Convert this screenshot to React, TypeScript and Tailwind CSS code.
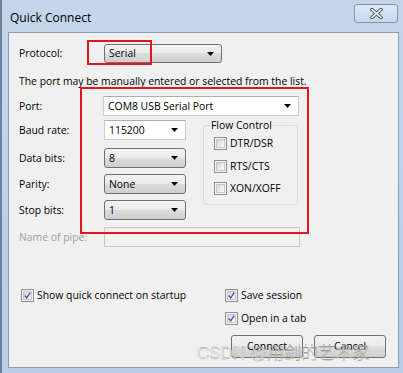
import React from "react";

function Arrow() {
  return (
    <svg width="7" height="4" viewBox="0 0 7 4" className="shrink-0">
      <path d="M0 0H7L3.5 4z" fill="#000" />
    </svg>
  );
}

function Drop({ value, w }: { value: string; w: string }) {
  return (
    <div
      className={`${w} h-[20px] rounded-[3px] border border-[#707070] bg-[linear-gradient(#f2f2f2,#ebebeb_50%,#dddddd_50%,#cfcfcf)] flex items-center justify-between pl-[4px] pr-[7px]`}
    >
      <span>{value}</span>
      <Arrow />
    </div>
  );
}

function Edit({ value, w }: { value: string; w: string }) {
  return (
    <div
      className={`${w} h-[20px] border border-[#c9ccd2] border-t-[#abadb3] bg-white flex items-center justify-between pl-[4px] pr-[7px]`}
    >
      <span>{value}</span>
      <Arrow />
    </div>
  );
}

function Check({ checked }: { checked?: boolean }) {
  return (
    <div className="w-[13px] h-[13px] border border-[#8e8f8f] bg-[#f4f4f4] p-[1px] shrink-0">
      <div className="w-full h-full border border-[#c6c6c6] bg-[linear-gradient(135deg,#d6d6d6,#fdfdfd)] flex items-center justify-center">
        {checked && (
          <svg width="9" height="9" viewBox="0 0 9 9">
            <path d="M1 4.5L3.5 7.5L8 0.8" fill="none" stroke="#3c5ea7" strokeWidth="1.8" />
          </svg>
        )}
      </div>
    </div>
  );
}

function Btn({ label }: { label: string }) {
  return (
    <div className="w-[72px] h-[23px] rounded-[3px] border border-[#707070] bg-[linear-gradient(#f2f2f2,#ebebeb_50%,#dddddd_50%,#cfcfcf)] flex items-center justify-center">
      {label}
    </div>
  );
}

export default function App() {
  return (
    <div className="w-[403px] h-[373px] overflow-hidden relative bg-[linear-gradient(#c3d6ec,#b8cde6)] border-l-2 border-[#6d819b] flex flex-col text-[10.4px] leading-[15px] text-black font-['Open_Sans','Noto_Sans',sans-serif]">
      <div className="h-[32px] flex items-start justify-between pl-[8px] pr-[5px] shrink-0">
        <div className="mt-[10px] text-[12px] leading-[16px]">Quick Connect</div>
        <div className="mt-[4px] w-[44px] h-[19px] rounded-[3px] border border-[#8195ae] bg-[linear-gradient(#dfe9f5,#c5d6ea)] flex items-center justify-center">
          <svg width="13" height="11" viewBox="0 0 13 11">
            <path d="M2 1.5L11 9.5M11 1.5L2 9.5" stroke="#4b5b6f" strokeWidth="3.6" strokeLinecap="round" />
            <path d="M2 1.5L11 9.5M11 1.5L2 9.5" stroke="#ffffff" strokeWidth="1.6" strokeLinecap="round" />
          </svg>
        </div>
      </div>
      <div className="relative flex-1 ml-[6px] mr-[4px] mb-[5px] border border-[#8a9cb3] bg-[#f0f0f0] flex flex-col pl-[10px]">
        <div className="mt-[11px] h-[19px] flex items-center">
          <div className="w-[85px]">Protocol:</div>
          <div className="w-[118px] h-[19px] rounded-[3px] border border-[#707070] bg-[linear-gradient(#f2f2f2,#ebebeb_50%,#dddddd_50%,#cfcfcf)] flex items-center justify-between pl-[4px] pr-[7px]">
            <span>Serial</span>
            <Arrow />
          </div>
        </div>
        <div className="mt-[11px] h-[15px]">The port may be manually entered or selected from the list.</div>
        <div className="mt-[7px] h-[20px] flex items-center">
          <div className="w-[84px]">Port:</div>
          <Edit value="COM8 USB Serial Port" w="w-[196px]" />
        </div>
        <div className="mt-[4px] flex">
          <div className="w-[167px] flex flex-col">
            <div className="h-[20px] flex items-center">
              <div className="w-[85px]">Baud rate:</div>
              <Edit value="115200" w="w-[82px]" />
            </div>
            <div className="mt-[8px] h-[20px] flex items-center">
              <div className="w-[85px]">Data bits:</div>
              <Drop value="8" w="w-[82px]" />
            </div>
            <div className="mt-[6px] h-[20px] flex items-center">
              <div className="w-[85px]">Parity:</div>
              <Drop value="None" w="w-[82px]" />
            </div>
            <div className="mt-[6px] h-[20px] flex items-center">
              <div className="w-[85px]">Stop bits:</div>
              <Drop value="1" w="w-[82px]" />
            </div>
          </div>
          <div className="ml-[17px] mt-[5px] w-[95px] h-[80px] relative rounded-[3px] border border-[#d5dfe5] flex flex-col pl-[10px] pt-[11px]">
            <div className="absolute left-[6px] top-[-8px] px-[1px] bg-[#f0f0f0]">Flow Control</div>
            <div className="flex items-center gap-[3px] h-[13px]">
              <Check />
              <span>DTR/DSR</span>
            </div>
            <div className="flex items-center gap-[3px] h-[13px] mt-[10px]">
              <Check />
              <span>RTS/CTS</span>
            </div>
            <div className="flex items-center gap-[3px] h-[13px] mt-[9px]">
              <Check />
              <span>XON/XOFF</span>
            </div>
          </div>
        </div>
        <div className="mt-[7px] h-[20px] flex items-center">
          <div className="w-[85px] text-[#a0a0a0]">Name of pipe:</div>
          <div className="w-[196px] h-[20px] border border-[#c9c9c9] bg-[#f0f0f0]" />
        </div>
        <div className="mt-[42px] flex">
          <div className="w-[206px] pl-[2px] flex items-start">
            <div className="flex items-center gap-[3px] h-[13px]">
              <Check checked />
              <span>Show quick connect on startup</span>
            </div>
          </div>
          <div className="flex flex-col">
            <div className="flex items-center gap-[3px] h-[13px]">
              <Check checked />
              <span>Save session</span>
            </div>
            <div className="flex items-center gap-[3px] h-[13px] mt-[10px]">
              <Check checked />
              <span>Open in a tab</span>
            </div>
            <div className="flex gap-[11px] mt-[10px] ml-[6px]">
              <Btn label="Connect" />
              <Btn label="Cancel" />
            </div>
          </div>
        </div>
        <div className="absolute left-[78px] top-[7px] w-[65px] h-[25px] border-2 border-[#e3151a]" />
        <div className="absolute left-[71px] top-[54px] w-[229px] h-[147px] border-2 border-[#e3151a]" />
        <div className="absolute left-[188px] top-[310px] text-[17px] leading-[22px] text-[#ffffff]/70 [-webkit-text-stroke:0.35px_#8c8c8c] font-['Liberation_Sans','Noto_Sans_CJK_SC',sans-serif] font-light whitespace-nowrap pointer-events-none">
          CSDN @用剑的艺术家
        </div>
      </div>
    </div>
  );
}
